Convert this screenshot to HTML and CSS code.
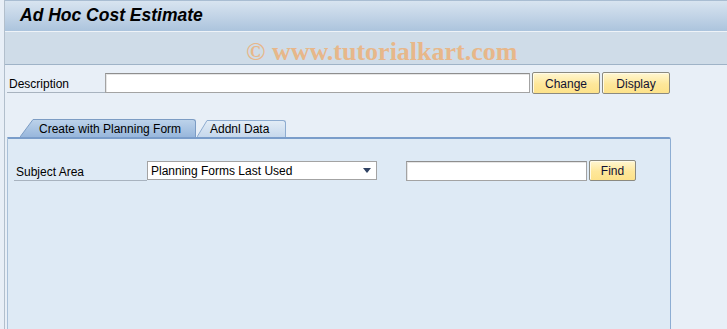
FILE: index.html
```html
<!DOCTYPE html>
<html>
<head>
<meta charset="utf-8">
<link rel="stylesheet" href="styles.css">
</head>
<body>
<div class="app">
  <div class="titlebar"><span class="title">Ad Hoc Cost Estimate</span></div>
  <div class="toolbar"><span class="watermark">© www.tutorialkart.com</span></div>
  <div class="content">
    <div class="desc-row">
      <div class="label label-desc">Description</div>
      <div class="input input-desc"></div>
      <div class="btn btn-change">Change</div>
      <div class="btn btn-display">Display</div>
    </div>
    <div class="tabstrip">
      <div class="tab tab-active">
        <svg class="slant" width="13" height="18" viewBox="0 0 13 18">
          <defs>
            <linearGradient id="ga" x1="0" y1="0" x2="0" y2="1">
              <stop offset="0" stop-color="#bcd2ea"/>
              <stop offset="1" stop-color="#98b7dc"/>
            </linearGradient>
          </defs>
          <polygon points="0,18 13,0.5 13,18" fill="url(#ga)"/>
          <line x1="0" y1="18" x2="13" y2="0.5" stroke="#7c9cc4" stroke-width="1"/>
        </svg>
        <div class="tab-body tab-body-active">Create with Planning Form</div>
      </div>
      <div class="tab tab-inactive">
        <svg class="slant" width="10" height="17" viewBox="0 0 10 17">
          <defs>
            <linearGradient id="gi" x1="0" y1="0" x2="0" y2="1">
              <stop offset="0" stop-color="#e2ecf6"/>
              <stop offset="1" stop-color="#c6d8ec"/>
            </linearGradient>
          </defs>
          <polygon points="0,17 10,0.5 10,17" fill="url(#gi)"/>
          <line x1="0" y1="17" x2="10" y2="0.5" stroke="#8eacd0" stroke-width="1"/>
        </svg>
        <div class="tab-body tab-body-inactive">Addnl Data</div>
      </div>
    </div>
    <div class="panel">
      <div class="subject-row">
        <div class="label label-subject">Subject Area</div>
        <div class="dropdown"><span>Planning Forms Last Used</span><span class="arrow"></span></div>
        <div class="input input-find"></div>
        <div class="btn btn-find">Find</div>
      </div>
    </div>
  </div>
</div>
</body>
</html>
```
FILE: styles.css
```css
html, body {
  margin: 0;
  padding: 0;
  height: 100%;
  overflow: hidden;
}
body {
  background: #e8eff7;
  font-family: "Liberation Sans", Arial, sans-serif;
  font-size: 12px;
  color: #000;
}
.app {
  margin-left: 4px;
  border-left: 1px solid #b2bfcc;
  height: 100vh;
  display: flex;
  flex-direction: column;
}
.titlebar {
  height: 30px;
  border-top: 1px solid #a9bdd2;
  border-bottom: 1px solid #eef3f8;
  background: linear-gradient(#d8e4f0, #acc4dd);
  display: flex;
  align-items: center;
  padding-left: 15px;
  flex: none;
}
.title {
  font-weight: bold;
  font-style: italic;
  font-size: 17.5px;
  line-height: 20px;
  color: #000;
  margin-top: -2px;
}
.toolbar {
  height: 32px;
  background: #cfdce8;
  border-bottom: 1px solid #9fb3c7;
  display: flex;
  align-items: center;
  padding-left: 241px;
  flex: none;
}
.watermark {
  font-family: "Liberation Serif", "Times New Roman", serif;
  font-weight: bold;
  font-size: 26px;
  color: #e7b78a;
  line-height: 30px;
  margin-top: 8px;
}
.content {
  flex: 1;
  display: flex;
  flex-direction: column;
}
.desc-row {
  margin-top: 7px;
  display: flex;
  align-items: center;
  height: 22px;
  padding-left: 2px;
  flex: none;
}
.label {
  box-sizing: border-box;
  height: 20px;
  line-height: 19px;
  padding-top: 2px;
  border-bottom: 1px solid #a8b3bf;
  padding-left: 2px;
  white-space: nowrap;
}
.label-desc {
  width: 98px;
}
.input {
  box-sizing: border-box;
  background: #fff;
  border: 1px solid #a3a3a3;
  border-top-color: #8e8e8e;
  box-shadow: inset 1px 1px 0 #e6e6e6;
}
.input-desc {
  width: 425px;
  height: 20px;
}
.btn {
  box-sizing: border-box;
  height: 22px;
  border: 1px solid #8b8a80;
  border-radius: 2px;
  background: linear-gradient(#fff7d2, #fee79a 55%, #fde28a);
  box-shadow: inset 1px 1px 0 #fffbe8;
  color: #111133;
  display: flex;
  align-items: center;
  justify-content: center;
  padding-top: 1px;
  white-space: nowrap;
}
.btn-change {
  margin-left: 2px;
  width: 68px;
}
.btn-display {
  margin-left: 2px;
  width: 68px;
}
.tabstrip {
  margin-top: 25px;
  display: flex;
  align-items: flex-end;
  padding-left: 15px;
  height: 18px;
  flex: none;
}
.tab {
  display: flex;
  align-items: flex-end;
}
.slant {
  display: block;
}
.tab-body {
  box-sizing: border-box;
  border-top: 1px solid #7c9cc4;
  border-right: 1px solid #7c9cc4;
  border-top-right-radius: 3px;
  white-space: nowrap;
  line-height: 18px;
}
.tab-body-active {
  height: 18px;
  width: 163px;
  padding-left: 6px;
  background: linear-gradient(#bcd2ea, #98b7dc);
}
.tab-inactive {
  margin-left: 1px;
}
.tab-body-inactive {
  height: 17px;
  width: 79px;
  padding-left: 3px;
  border-color: #8eacd0;
  line-height: 17px;
  background: linear-gradient(#e2ecf6, #c6d8ec);
}
.panel {
  margin-left: 2px;
  width: 664px;
  box-sizing: border-box;
  flex: 1;
  background: #deeaf5;
  border-top: 2px solid #7a9dca;
  border-left: 1px solid #a9c0d8;
  border-right: 1px solid #8dadd3;
  border-top-right-radius: 2px;
}
.subject-row {
  margin-top: 21px;
  display: flex;
  align-items: center;
  height: 21px;
  padding-left: 6px;
}
.label-subject {
  width: 133px;
}
.dropdown {
  box-sizing: border-box;
  width: 230px;
  height: 19px;
  background: #fff;
  border: 1px solid #a3a3a3;
  display: flex;
  align-items: center;
  justify-content: space-between;
  padding-left: 3px;
  padding-right: 5px;
  white-space: nowrap;
}
.arrow {
  width: 0;
  height: 0;
  border-left: 4px solid transparent;
  border-right: 4px solid transparent;
  border-top: 5px solid #2f4263;
}
.input-find {
  margin-left: 29px;
  width: 181px;
  height: 20px;
}
.btn-find {
  margin-left: 2px;
  width: 47px;
  height: 21px;
}
```
